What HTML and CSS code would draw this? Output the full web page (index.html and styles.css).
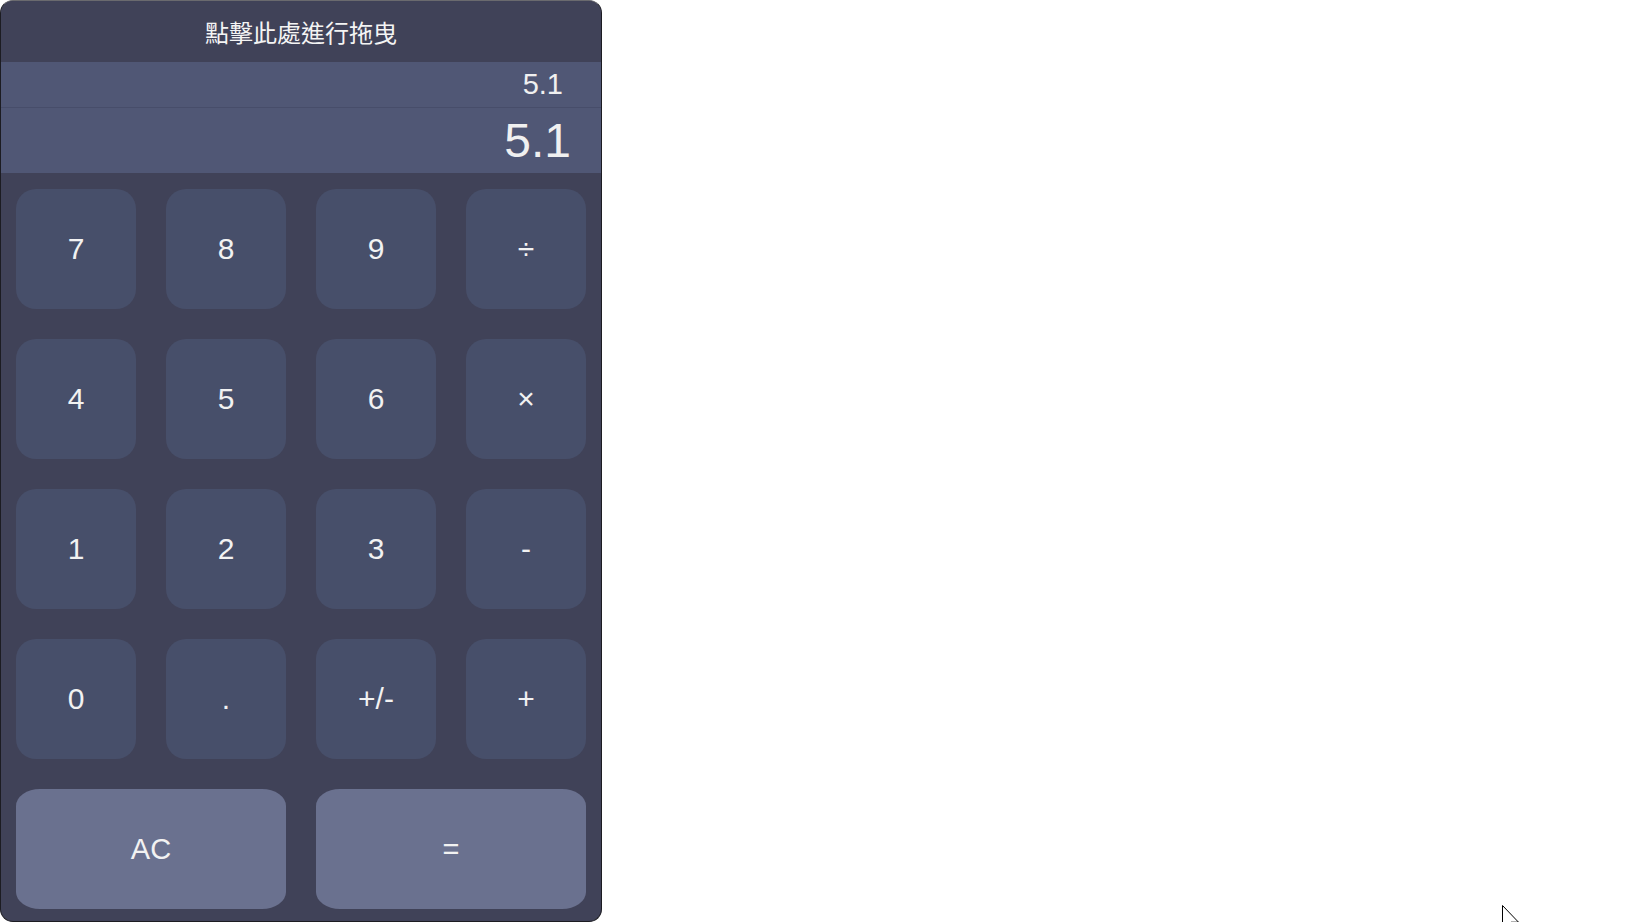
FILE: index.html
```html
<!DOCTYPE html>
<html lang="zh-Hant">
<head>
<meta charset="utf-8">
<title>Calculator</title>
<link rel="stylesheet" href="styles.css">
</head>
<body>
<div class="calc">
  <div class="drag-bar">點擊此處進行拖曳</div>
  <div class="display">
    <div class="prev">5.1</div>
    <div class="current">5.1</div>
  </div>
  <div class="keys">
    <button class="key">7</button>
    <button class="key">8</button>
    <button class="key">9</button>
    <button class="key">÷</button>
    <button class="key">4</button>
    <button class="key">5</button>
    <button class="key">6</button>
    <button class="key">×</button>
    <button class="key">1</button>
    <button class="key">2</button>
    <button class="key">3</button>
    <button class="key">-</button>
    <button class="key">0</button>
    <button class="key">.</button>
    <button class="key">+/-</button>
    <button class="key">+</button>
    <button class="key key-wide">AC</button>
    <button class="key key-wide">=</button>
  </div>
</div>
<svg class="cursor" width="18" height="28" viewBox="0 0 18 28">
  <path d="M0.5 0.5 L0.5 23.5 L6 18 L9.5 26.5 L12.5 25.2 L9 17.2 L16.5 17.2 Z" fill="#fff" stroke="#000" stroke-width="1"/>
</svg>
</body>
</html>
```

FILE: styles.css
```css
html, body {
  margin: 0;
  padding: 0;
  background: #ffffff;
  height: 100%;
  overflow: hidden;
}

body {
  font-family: "Liberation Sans", Arial, "Noto Sans CJK TC", sans-serif;
}

.calc {
  width: 602px;
  height: 922px;
  box-sizing: border-box;
  border: 1px solid #1c1c22;
  border-top-color: #6a6a6e;
  border-radius: 13px;
  overflow: hidden;
  background: #404258;
  display: flex;
  flex-direction: column;
}

.drag-bar {
  height: 61px;
  line-height: 62px;
  text-align: center;
  color: #f4f4f4;
  font-family: "Noto Sans CJK TC", "Noto Sans CJK SC", sans-serif;
  font-size: 24px;
  font-weight: 400;
  background: #404258;
}

.display {
  background: #505775;
  color: #f0f0f0;
  text-align: right;
}

.prev {
  height: 45px;
  line-height: 45px;
  font-size: 29px;
  padding-right: 38px;
  border-bottom: 1px solid #474d6a;
}

.current {
  height: 65px;
  line-height: 65px;
  font-size: 48px;
  padding-right: 30px;
}

.keys {
  flex: 1;
  display: grid;
  grid-template-columns: repeat(4, 120px);
  grid-auto-rows: 120px;
  gap: 30px;
  padding: 16px 15px 12px 15px;
  align-content: start;
}

.key {
  border: none;
  margin: 0;
  padding: 0;
  background: #474f6a;
  color: #f2f2f2;
  font-family: "Liberation Sans", Arial, sans-serif;
  font-size: 30px;
  border-radius: 20px;
  cursor: pointer;
}

.key-wide {
  grid-column: span 2;
  background: #6a718f;
  font-size: 29px;
  border-radius: 24px / 17px;
}

.cursor {
  position: absolute;
  left: 1502px;
  top: 905px;
}
```
